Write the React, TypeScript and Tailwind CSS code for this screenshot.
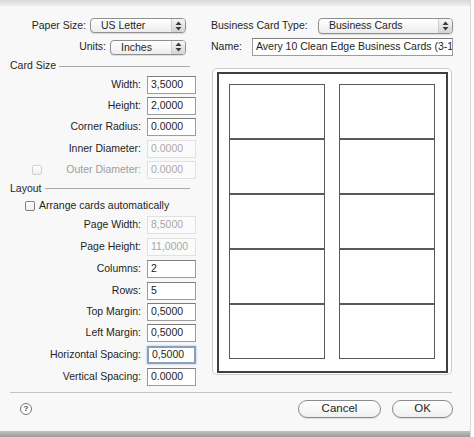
import React from "react";

const font = "font-['Liberation_Sans',Arial,sans-serif]";

const Stepper = () => (
  <svg width="7" height="10" viewBox="0 0 7 10">
    <path d="M3.5 0.5 L6.5 4 L0.5 4 Z" fill="#3a3a3a" />
    <path d="M3.5 9.5 L6.5 6 L0.5 6 Z" fill="#3a3a3a" />
  </svg>
);

const PopUp = ({ value, className }: { value: string; className: string }) => {
  return (
    <div
      className={`flex items-center rounded-[4px] border border-[#8f8f8f] bg-linear-to-b from-white to-[#ededed] shadow-[0_1px_1px_rgba(0,0,0,0.12)] ${className}`}
    >
      <span className="flex-1 pl-[10px] leading-none truncate">
        {value}
      </span>

      <span className="flex items-center justify-center w-[14px] h-full rounded-r-[3px] border-l border-[#cfcfcf] bg-linear-to-b from-[#f7f7f7] to-[#d4d4d4]">
        <Stepper />
      </span>
    </div>
  );
};

const TextBox = ({
  value,
  disabled,
  focused,
  className = "w-[49px]"
}: {
  value: string;
  disabled?: boolean;
  focused?: boolean;
  className?: string;
}) => {
  let frame = "border border-[#9c9c9c] border-t-[#7d7d7d] bg-white text-[#1e1e1e]";
  if (disabled) frame = "border border-[#e1e1e1] bg-[#fbfbfb] text-[#a9a9a9]";
  if (focused) frame = "border-2 border-[#8aa1bd] bg-white text-[#1e1e1e] shadow-[0_0_2px_#9fb6d3]";

  return (
    <div className={`flex items-center h-[18px] pl-[3px] overflow-hidden whitespace-nowrap ${frame} ${className}`}>
      {value}
    </div>
  );
};

const Check = ({ dim }: { dim?: boolean }) => (
  <span
    className={`inline-block w-[10px] h-[10px] rounded-[2px] border bg-linear-to-b from-white to-[#eeeeee] ${dim ? "border-[#d0d0d0]" : "border-[#7f7f7f]"}`}
  />
);

const Field = ({
  label,
  value,
  disabled,
  dimLabel,
  focused,
  check,
  h = "h-[21px]"
}: {
  label: string;
  value: string;
  disabled?: boolean;
  dimLabel?: boolean;
  focused?: boolean;
  check?: boolean;
  h?: string;
}) => {
  return (
    <div className={`flex items-center ${h}`}>
      <div className="flex items-center w-[141px]">
        {check && (
          <span className="ml-[32px] flex">
            <Check dim />
          </span>
        )}

        <span className={`flex-1 text-right ${dimLabel ? "text-[#9d9d9d]" : ""}`}>
          {label}
        </span>
      </div>

      <TextBox
        value={value}
        disabled={disabled}
        focused={focused}
        className="ml-[6px] w-[49px]"
      />
    </div>
  );
};

const Section = ({ title, h }: { title: string; h: string }) => (
  <div className={`flex items-center ${h}`}>
    <span className="ml-[10px]">
      {title}
    </span>

    <span className="flex-1 h-px bg-[#a9a9a9] ml-[3px] mr-[21px]" />
  </div>
);

const CardColumn = () => (
  <div className="flex flex-col w-[96px]">
    {[0, 1, 2, 3, 4].map((i) => (
      <div
        key={i}
        className="h-[55px] border border-[#5a5a5a] bg-white"
      />
    ))}
  </div>
);

const PillButton = ({ label, className }: { label: string; className: string }) => (
  <div
    className={`flex items-center justify-center h-[18px] rounded-full border border-[#8a8a8a] bg-linear-to-b from-white to-[#f0f0f0] shadow-[0_1px_1px_rgba(0,0,0,0.1)] text-[11.5px] ${className}`}
  >
    {label}
  </div>
);

export default function App() {
  return (
    <div className={`w-[474px] h-[437px] overflow-hidden bg-white text-[10.5px] text-[#1f1f1f] ${font}`}>
      <div className="w-[471px] h-full flex flex-col bg-[#f8f8f8] border-r border-[#d9d9d9]">
        {/* window title strip */}
        <div className="h-[6px] bg-linear-to-b from-[#d9d9d9] to-[#efefef]" />

        <div className="flex">
          {/* label settings */}
          <div className="w-[211px] flex flex-col pt-[9px]">
            <div className="flex items-center h-[21px]">
              <span className="w-[86px] text-right">Paper Size:</span>
              <PopUp value="US Letter" className="ml-[4px] w-[96px] h-[15px]" />
            </div>

            <div className="flex items-center h-[22px]">
              <span className="w-[106px] text-right">Units:</span>
              <PopUp value="Inches" className="ml-[4px] w-[76px] h-[15px]" />
            </div>

            <Section title="Card Size" h="h-[16px]" />

            <Field label="Width:" value="3,5000" />
            <Field label="Height:" value="2,0000" />
            <Field label="Corner Radius:" value="0.0000" h="h-[22px]" />
            <Field label="Inner Diameter:" value="0.0000" disabled />
            <Field label="Outer Diameter:" value="0.0000" disabled dimLabel check />

            <Section title="Layout" h="h-[17px]" />

            <div className="flex items-center h-[17px]">
              <span className="ml-[25px] flex">
                <Check />
              </span>
              <span className="ml-[4px]">Arrange cards automatically</span>
            </div>

            <Field label="Page Width:" value="8,5000" disabled h="h-[22px]" />
            <Field label="Page Height:" value="11,0000" disabled h="h-[22px]" />
            <Field label="Columns:" value="2" h="h-[22px]" />
            <Field label="Rows:" value="5" />
            <Field label="Top Margin:" value="0,5000" />
            <Field label="Left Margin:" value="0,5000" h="h-[22px]" />
            <Field label="Horizontal Spacing:" value="0,5000" focused h="h-[22px]" />
            <Field label="Vertical Spacing:" value="0.0000" />
          </div>

          {/* card type + preview */}
          <div className="w-[242px] flex flex-col pt-[9px]">
            <div className="flex items-center h-[21px]">
              <span className="w-[107px]">Business Card Type:</span>
              <PopUp value="Business Cards" className="w-[135px] h-[16px]" />
            </div>

            <div className="flex items-center h-[21px]">
              <span className="w-[41px]">Name:</span>
              <TextBox
                value="Avery 10 Clean Edge Business Cards (3-1/2 x 2)"
                className="w-[201px]"
              />
            </div>

            <div className="mt-[11px] ml-[1px] w-[240px] h-[307px] rounded-[5px] border border-[#cdcdcd] bg-white pt-[3px] pl-[4px] pr-[3px] pb-[1px]">
              <div className="h-full border-2 border-[#3f3f3f] bg-white flex gap-[14px] pt-[10px] pl-[10px]">
                <CardColumn />
                <CardColumn />
              </div>
            </div>
          </div>
        </div>

        <div className="mt-[5px] mx-[10px] mr-[18px] h-px bg-[#c4c4c4]" />

        <div className="flex items-center mt-[7px] h-[18px]">
          <span className="ml-[20px] flex items-center justify-center w-[12px] h-[12px] rounded-full border border-[#777] bg-white text-[8px] font-bold text-[#444]">
            ?
          </span>

          <PillButton label="Cancel" className="ml-[266px] w-[83px]" />
          <PillButton label="OK" className="ml-[11px] w-[61px]" />
        </div>

        <div className="flex-1" />

        {/* lower window edge */}
        <div className="h-[6px] bg-linear-to-b from-[#c2c2c2] to-[#9a9a9a]" />
      </div>
    </div>
  );
}
